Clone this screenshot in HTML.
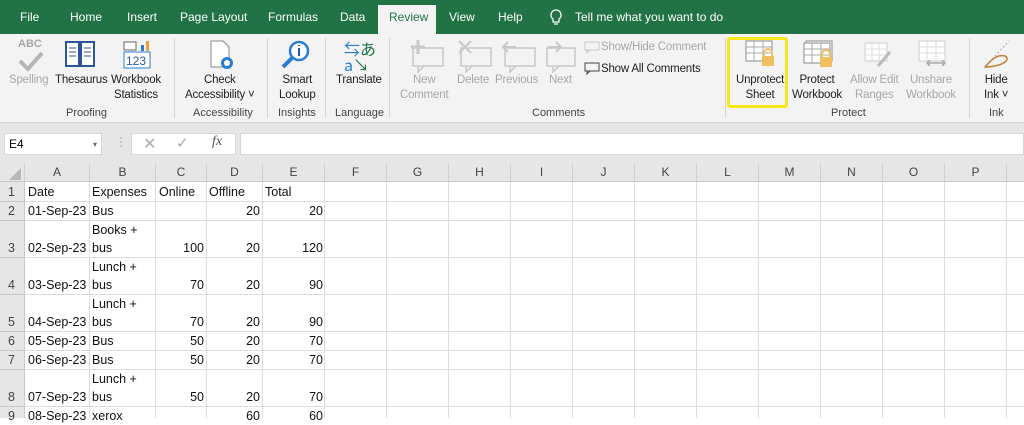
<!DOCTYPE html>
<html><head><meta charset="utf-8"><style>
*{margin:0;padding:0;box-sizing:border-box}
body{width:1024px;height:418px;overflow:hidden;background:#fff;font-family:"Liberation Sans",sans-serif;position:relative}
.a{position:absolute}
.tab{position:absolute;top:10px;color:#fff;font-size:12px}
.rb{position:absolute;font-size:11.5px;letter-spacing:-0.2px;color:#222;text-align:center;line-height:15px;white-space:nowrap}
.dis{color:#a8a8a8}
.gl{position:absolute;top:107px;font-size:11px;color:#444;text-align:center}
.sep{position:absolute;top:38px;width:1px;height:80px;background:#d4d4d4}
.ch{position:absolute;top:164px;height:17px;font-size:12px;color:#444;text-align:center;line-height:17px;border-right:1px solid #d0d0d0}
.c{position:absolute;font-size:12.5px;color:#111;line-height:18px;white-space:nowrap}
.r{text-align:right}
</style></head><body>
<div class="a" style="left:0;top:0;width:1024px;height:34px;background:#217346"></div>
<div class="tab" style="left:20px">File</div>
<div class="tab" style="left:70px">Home</div>
<div class="tab" style="left:127px">Insert</div>
<div class="tab" style="left:180px">Page Layout</div>
<div class="tab" style="left:268px">Formulas</div>
<div class="tab" style="left:340px">Data</div>
<div class="a" style="left:378px;top:5px;width:58px;height:30px;background:#f3f3f3"></div>
<div class="tab" style="left:389px;color:#217346">Review</div>
<div class="tab" style="left:449px">View</div>
<div class="tab" style="left:498px">Help</div>
<svg class="a" style="left:549px;top:9px" width="14" height="18"><path d="M7 1a5 5 0 0 0-3 9v3h6v-3a5 5 0 0 0-3-9zM5 15h4" stroke="#fff" fill="none" stroke-width="1.3"/></svg>
<div class="tab" style="left:575px">Tell me what you want to do</div>
<div class="a" style="left:0;top:34px;width:1024px;height:89px;background:#f3f3f3"></div>
<div class="a" style="left:0;top:122px;width:1024px;height:1px;background:#d6d6d6"></div>
<div class="a dis" style="left:18px;top:38px;font-size:11px;font-weight:bold">ABC</div>
<svg class="a" style="left:18px;top:50px" width="26" height="22"><path d="M2 11l8 8L24 3" stroke="#b5b5b5" stroke-width="4" fill="none"/></svg>
<div class="rb dis" style="left:9px;top:73px">Spelling</div>
<svg class="a" style="left:64px;top:40px" width="32" height="28"><rect x="2" y="2" width="13" height="24" fill="#fff" stroke="#2b579a" stroke-width="2"/><rect x="17" y="2" width="13" height="24" fill="#fff" stroke="#2b579a" stroke-width="2"/><path d="M5 8h7M5 12h7M5 16h7M20 8h7M20 12h7M20 16h7" stroke="#2b579a"/></svg>
<div class="rb" style="left:55px;top:73px">Thesaurus</div>
<svg class="a" style="left:122px;top:40px" width="30" height="30"><rect x="2" y="2" width="12" height="8" fill="#fff" stroke="#666"/><rect x="19" y="5" width="3" height="6" fill="#2b7cd3"/><rect x="24" y="1" width="3" height="10" fill="#e8a33a"/><rect x="2" y="12" width="26" height="16" fill="#fff" stroke="#2b7cd3"/><text x="4" y="25" font-size="12" fill="#2b579a" font-family="Liberation Sans">123</text></svg>
<div class="rb" style="left:111px;top:73px">Workbook<br>Statistics</div>
<div class="gl" style="left:66px">Proofing</div>
<div class="sep" style="left:174px"></div>
<svg class="a" style="left:208px;top:40px" width="28" height="30"><path d="M3 1h12l6 6v20H3z" fill="#fff" stroke="#888"/><circle cx="19" cy="23" r="6" fill="#2b7cd3"/><circle cx="19" cy="23" r="3" fill="#fff"/></svg>
<div class="rb" style="left:185px;top:73px">Check<br>Accessibility ˅</div>
<div class="gl" style="left:193px">Accessibility</div>
<div class="sep" style="left:267px"></div>
<svg class="a" style="left:280px;top:40px" width="30" height="30"><circle cx="19" cy="11" r="9" fill="#fff" stroke="#2b7cd3" stroke-width="2.5"/><path d="M12 18L3 27" stroke="#2b7cd3" stroke-width="4"/><path d="M19 8v8M19 5v1" stroke="#2b579a" stroke-width="2"/></svg>
<div class="rb" style="left:279px;top:73px">Smart<br>Lookup</div>
<div class="gl" style="left:278px">Insights</div>
<div class="sep" style="left:325px"></div>
<div class="a" style="left:344px;top:40px;font-size:16px;color:#2b7cd3;line-height:16px;font-family:'Noto Sans CJK JP',sans-serif">⇆<span style="color:#217346">あ</span><br>a<span style="color:#217346">↘</span></div>
<div class="rb" style="left:336px;top:73px">Translate</div>
<div class="gl" style="left:335px">Language</div>
<div class="sep" style="left:389px"></div>
<svg class="a" style="left:408px;top:38px" width="36" height="36" fill="none" stroke="#c8c8c8" stroke-width="1.5"><rect x="5" y="10" width="30" height="18"/><path d="M10 28v6l6-6"/><path d="M10 2v14M3 9h14" stroke-width="3"/></svg>
<div class="rb dis" style="left:400px;top:73px">New<br>Comment</div>
<svg class="a" style="left:456px;top:38px" width="36" height="36" fill="none" stroke="#c8c8c8" stroke-width="1.5"><rect x="5" y="10" width="30" height="18"/><path d="M10 28v6l6-6"/><path d="M3 3l12 12M15 3L3 15" stroke-width="2"/></svg>
<div class="rb dis" style="left:457px;top:73px">Delete</div>
<svg class="a" style="left:500px;top:38px" width="36" height="36" fill="none" stroke="#c8c8c8" stroke-width="1.5"><rect x="5" y="10" width="30" height="18"/><path d="M10 28v6l6-6"/><path d="M16 9H3M8 4L3 9l5 5" stroke-width="2"/></svg>
<div class="rb dis" style="left:495px;top:73px">Previous</div>
<svg class="a" style="left:545px;top:38px" width="36" height="36" fill="none" stroke="#c8c8c8" stroke-width="1.5"><rect x="2" y="10" width="28" height="18"/><path d="M8 28v6l6-6"/><path d="M3 9h13M11 4l5 5-5 5" stroke-width="2"/></svg>
<div class="rb dis" style="left:549px;top:73px">Next</div>
<svg class="a" style="left:584px;top:41px" width="16" height="13" fill="none" stroke="#c8c8c8"><rect x="1" y="1" width="14" height="8"/><path d="M3 9v3l3-3"/></svg>
<div class="rb dis" style="left:601px;top:40px">Show/Hide Comment</div>
<svg class="a" style="left:584px;top:62px" width="16" height="13" fill="none" stroke="#444"><rect x="1" y="1" width="14" height="8"/><path d="M3 9v3l3-3"/></svg>
<div class="rb" style="left:601px;top:62px">Show All Comments</div>
<div class="gl" style="left:532px">Comments</div>
<div class="sep" style="left:725px"></div>
<div class="a" style="left:727px;top:37px;width:61px;height:71px;border:3px solid #f8e71c;border-radius:3px"></div>
<svg class="a" style="left:745px;top:40px" width="32" height="30"><rect x="1" y="1" width="26" height="20" fill="#fff" stroke="#888"/><path d="M1 7h26M1 13h26M9 1v20M18 1v20" stroke="#aaa"/><rect x="17" y="16" width="12" height="10" fill="#f0c060"/><path d="M19 16v-3a4 4 0 0 1 8 0v3" stroke="#f0c060" stroke-width="2" fill="none"/></svg>
<div class="rb" style="left:736px;top:73px">Unprotect<br>Sheet</div>
<svg class="a" style="left:803px;top:40px" width="32" height="30"><rect x="3" y="1" width="26" height="20" fill="#fff" stroke="#888"/><rect x="1" y="3" width="26" height="20" fill="#fff" stroke="#888"/><path d="M1 9h26M1 15h26M9 3v20M18 3v20" stroke="#aaa"/><rect x="17" y="17" width="12" height="10" fill="#f0c060"/><path d="M19 17v-3a4 4 0 0 1 8 0v3" stroke="#f0c060" stroke-width="2" fill="none"/></svg>
<div class="rb" style="left:792px;top:73px">Protect<br>Workbook</div>
<svg class="a" style="left:864px;top:42px" width="30" height="28"><rect x="1" y="1" width="22" height="18" fill="#fff" stroke="#ccc"/><path d="M1 7h22M1 13h22M8 1v18M15 1v18" stroke="#ddd"/><path d="M14 24L26 10" stroke="#bbb" stroke-width="3"/></svg>
<div class="rb dis" style="left:850px;top:73px">Allow Edit<br>Ranges</div>
<svg class="a" style="left:917px;top:40px" width="32" height="30"><rect x="2" y="1" width="26" height="20" fill="#fff" stroke="#ccc"/><path d="M2 7h26M2 13h26M10 1v20M19 1v20" stroke="#ddd"/><path d="M10 23h18M13 20l-3 3 3 3M25 20l3 3-3 3" stroke="#aaa" stroke-width="1.5" fill="none"/></svg>
<div class="rb dis" style="left:906px;top:73px">Unshare<br>Workbook</div>
<div class="gl" style="left:831px">Protect</div>
<div class="sep" style="left:969px"></div>
<svg class="a" style="left:981px;top:40px" width="32" height="30"><path d="M3 28L28 1" stroke="#aaa" stroke-dasharray="2 2"/><path d="M4 27C10 20 16 14 24 16c5 2 2 10-20 11" stroke="#c08040" stroke-width="1.5" fill="none"/></svg>
<div class="rb" style="left:984px;top:73px">Hide<br>Ink ˅</div>
<div class="gl" style="left:989px">Ink</div>
<div class="a" style="left:0;top:123px;width:1024px;height:41px;background:#e6e6e6"></div>
<div class="a" style="left:4px;top:133px;width:98px;height:22px;background:#fff;border:1px solid #d6d6d6;font-size:12px;padding:3px 4px">E4<span style="float:right;font-size:8px;color:#666;margin-top:3px">▾</span></div>
<div class="a" style="left:115px;top:135px;color:#aaa;font-size:12px">⋮</div>
<div class="a" style="left:131px;top:133px;width:105px;height:22px;background:#fff;border:1px solid #d6d6d6"></div>
<div class="a" style="left:143px;top:134px;color:#aaa;font-size:16px">✕</div>
<div class="a" style="left:176px;top:134px;color:#aaa;font-size:15px">✓</div>
<div class="a" style="left:212px;top:134px;color:#555;font-size:14px;font-style:italic;font-family:'Liberation Serif',serif">fx</div>
<div class="a" style="left:240px;top:133px;width:784px;height:22px;background:#fff;border:1px solid #d6d6d6"></div>
<div class="a" style="left:0;top:164px;width:1024px;height:18px;background:#e6e6e6;border-bottom:1px solid #c8c8c8"></div>
<div class="a" style="left:0;top:182px;width:25px;height:236px;background:#e6e6e6"></div>
<svg class="a" style="left:6px;top:168px" width="16" height="12"><path d="M15 0v12H3z" fill="#b8b8b8"/></svg>
<div class="ch" style="left:0;width:25px"></div>
<div class="ch" style="left:25px;width:65px">A</div>
<div class="ch" style="left:90px;width:66px">B</div>
<div class="ch" style="left:156px;width:51px">C</div>
<div class="ch" style="left:207px;width:56px">D</div>
<div class="ch" style="left:263px;width:62px">E</div>
<div class="ch" style="left:325px;width:62px">F</div>
<div class="ch" style="left:387px;width:62px">G</div>
<div class="ch" style="left:449px;width:62px">H</div>
<div class="ch" style="left:511px;width:62px">I</div>
<div class="ch" style="left:573px;width:62px">J</div>
<div class="ch" style="left:635px;width:62px">K</div>
<div class="ch" style="left:697px;width:62px">L</div>
<div class="ch" style="left:759px;width:62px">M</div>
<div class="ch" style="left:821px;width:62px">N</div>
<div class="ch" style="left:883px;width:62px">O</div>
<div class="ch" style="left:945px;width:62px">P</div>
<svg class="a" style="left:0;top:182px" width="1024" height="236">
<g stroke="#dcdcdc" stroke-width="1">
<path d="M89.5 0v236M155.5 0v236M206.5 0v236M262.5 0v236M324.5 0v236M386.5 0v236M448.5 0v236M510.5 0v236M572.5 0v236M634.5 0v236M696.5 0v236M758.5 0v236M820.5 0v236M882.5 0v236M944.5 0v236M1006.5 0v236"/>
<path d="M25 19.5h1000M25 38.5h1000M25 75.5h1000M25 112.5h1000M25 149.5h1000M25 168.5h1000M25 187.5h1000M25 224.5h1000"/>
</g>
<path d="M0 19.5h25M0 38.5h25M0 75.5h25M0 112.5h25M0 149.5h25M0 168.5h25M0 187.5h25M0 224.5h25M24.5 0v236" stroke="#c8c8c8"/>
</svg>
<div class="c" style="left:8px;top:183px;color:#444">1</div>
<div class="c" style="left:8px;top:202px;color:#444">2</div>
<div class="c" style="left:8px;top:239px;color:#444">3</div>
<div class="c" style="left:8px;top:276px;color:#444">4</div>
<div class="c" style="left:8px;top:313px;color:#444">5</div>
<div class="c" style="left:8px;top:332px;color:#444">6</div>
<div class="c" style="left:8px;top:351px;color:#444">7</div>
<div class="c" style="left:8px;top:388px;color:#444">8</div>
<div class="c" style="left:8px;top:407px;color:#444">9</div>
<div class="c" style="left:28px;top:183px">Date</div><div class="c" style="left:92px;top:183px">Expenses</div><div class="c" style="left:159px;top:183px">Online</div><div class="c" style="left:209px;top:183px">Offline</div><div class="c" style="left:265px;top:183px">Total</div>
<div class="c" style="left:28px;top:202px">01-Sep-23</div><div class="c" style="left:92px;top:202px">Bus</div><div class="c r" style="left:207px;width:53px;top:202px">20</div><div class="c r" style="left:263px;width:60px;top:202px">20</div>
<div class="c" style="left:92px;top:221px">Books +</div>
<div class="c" style="left:28px;top:239px">02-Sep-23</div><div class="c" style="left:92px;top:239px">bus</div><div class="c r" style="left:156px;width:48px;top:239px">100</div><div class="c r" style="left:207px;width:53px;top:239px">20</div><div class="c r" style="left:263px;width:60px;top:239px">120</div>
<div class="c" style="left:92px;top:258px">Lunch +</div>
<div class="c" style="left:28px;top:276px">03-Sep-23</div><div class="c" style="left:92px;top:276px">bus</div><div class="c r" style="left:156px;width:48px;top:276px">70</div><div class="c r" style="left:207px;width:53px;top:276px">20</div><div class="c r" style="left:263px;width:60px;top:276px">90</div>
<div class="c" style="left:92px;top:295px">Lunch +</div>
<div class="c" style="left:28px;top:313px">04-Sep-23</div><div class="c" style="left:92px;top:313px">bus</div><div class="c r" style="left:156px;width:48px;top:313px">70</div><div class="c r" style="left:207px;width:53px;top:313px">20</div><div class="c r" style="left:263px;width:60px;top:313px">90</div>
<div class="c" style="left:28px;top:332px">05-Sep-23</div><div class="c" style="left:92px;top:332px">Bus</div><div class="c r" style="left:156px;width:48px;top:332px">50</div><div class="c r" style="left:207px;width:53px;top:332px">20</div><div class="c r" style="left:263px;width:60px;top:332px">70</div>
<div class="c" style="left:28px;top:351px">06-Sep-23</div><div class="c" style="left:92px;top:351px">Bus</div><div class="c r" style="left:156px;width:48px;top:351px">50</div><div class="c r" style="left:207px;width:53px;top:351px">20</div><div class="c r" style="left:263px;width:60px;top:351px">70</div>
<div class="c" style="left:92px;top:370px">Lunch +</div>
<div class="c" style="left:28px;top:388px">07-Sep-23</div><div class="c" style="left:92px;top:388px">bus</div><div class="c r" style="left:156px;width:48px;top:388px">50</div><div class="c r" style="left:207px;width:53px;top:388px">20</div><div class="c r" style="left:263px;width:60px;top:388px">70</div>
<div class="c" style="left:28px;top:407px">08-Sep-23</div><div class="c" style="left:92px;top:407px">xerox</div><div class="c r" style="left:207px;width:53px;top:407px">60</div><div class="c r" style="left:263px;width:60px;top:407px">60</div>
</body></html>
